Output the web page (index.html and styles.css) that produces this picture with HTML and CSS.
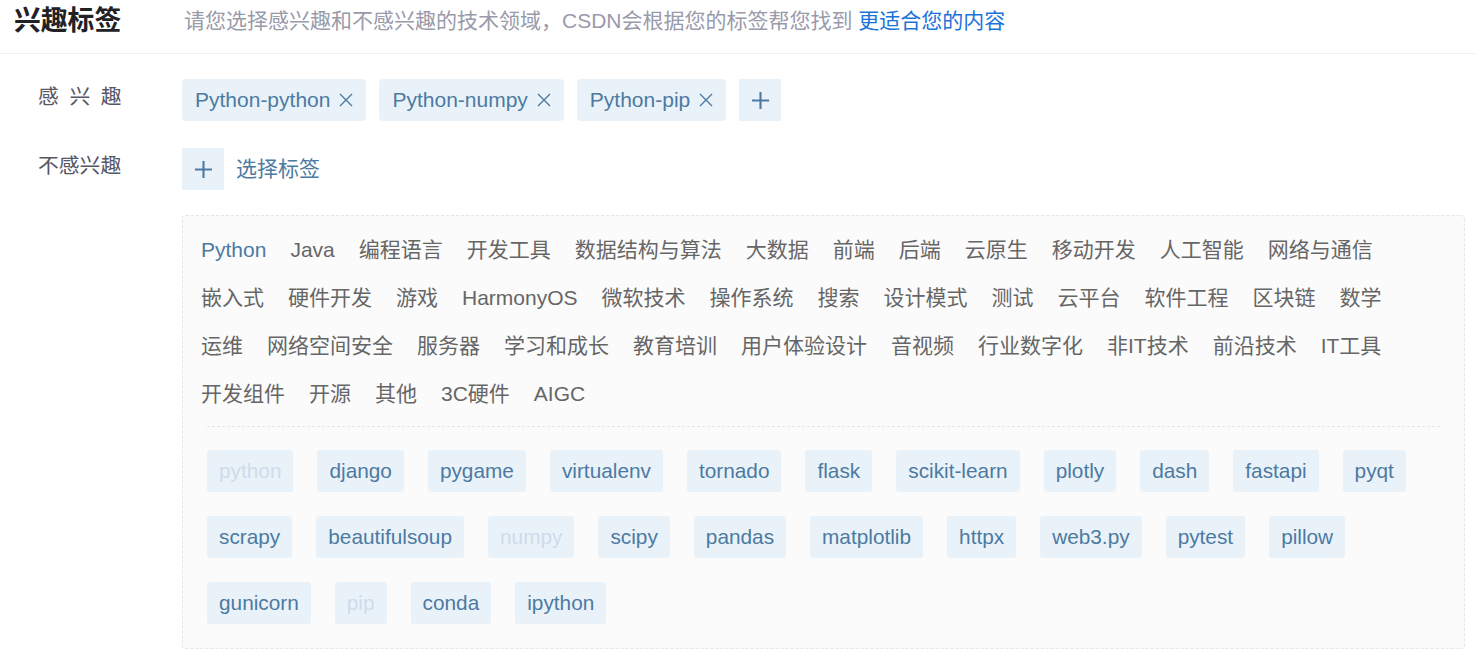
FILE: index.html
```html
<!DOCTYPE html>
<html lang="zh-CN">
<head>
<meta charset="utf-8">
<title>兴趣标签</title>
<link rel="stylesheet" href="styles.css">
</head>
<body>
<header class="head">
  <h1 class="title">兴趣标签</h1>
  <p class="desc">请您选择感兴趣和不感兴趣的技术领域，CSDN会根据您的标签帮您找到 <a class="link" href="#">更适合您的内容</a></p>
</header>

<section class="row row-like">
  <div class="label label-spread">感兴趣</div>
  <div class="tags">
    <span class="tag">Python-python<svg class="x" viewBox="0 0 14 14"><path d="M1 1L13 13M13 1L1 13"/></svg></span>
    <span class="tag">Python-numpy<svg class="x" viewBox="0 0 14 14"><path d="M1 1L13 13M13 1L1 13"/></svg></span>
    <span class="tag">Python-pip<svg class="x" viewBox="0 0 14 14"><path d="M1 1L13 13M13 1L1 13"/></svg></span>
    <span class="add"><svg class="plus" viewBox="0 0 20 20"><path d="M10 1V19M1 10H19"/></svg></span>
  </div>
</section>

<section class="row row-dislike">
  <div class="label">不感兴趣</div>
  <div class="tags">
    <span class="add"><svg class="plus" viewBox="0 0 20 20"><path d="M10 1V19M1 10H19"/></svg></span>
    <span class="pick">选择标签</span>
  </div>
</section>

<section class="panel">
  <div class="cats">
    <span class="cat active">Python</span>
    <span class="cat">Java</span>
    <span class="cat">编程语言</span>
    <span class="cat">开发工具</span>
    <span class="cat">数据结构与算法</span>
    <span class="cat">大数据</span>
    <span class="cat">前端</span>
    <span class="cat">后端</span>
    <span class="cat">云原生</span>
    <span class="cat">移动开发</span>
    <span class="cat">人工智能</span>
    <span class="cat">网络与通信</span>
    <span class="cat">嵌入式</span>
    <span class="cat">硬件开发</span>
    <span class="cat">游戏</span>
    <span class="cat">HarmonyOS</span>
    <span class="cat">微软技术</span>
    <span class="cat">操作系统</span>
    <span class="cat">搜索</span>
    <span class="cat">设计模式</span>
    <span class="cat">测试</span>
    <span class="cat">云平台</span>
    <span class="cat">软件工程</span>
    <span class="cat">区块链</span>
    <span class="cat">数学</span>
    <span class="cat">运维</span>
    <span class="cat">网络空间安全</span>
    <span class="cat">服务器</span>
    <span class="cat">学习和成长</span>
    <span class="cat">教育培训</span>
    <span class="cat">用户体验设计</span>
    <span class="cat">音视频</span>
    <span class="cat">行业数字化</span>
    <span class="cat">非IT技术</span>
    <span class="cat">前沿技术</span>
    <span class="cat">IT工具</span>
    <span class="cat">开发组件</span>
    <span class="cat">开源</span>
    <span class="cat">其他</span>
    <span class="cat">3C硬件</span>
    <span class="cat">AIGC</span>
  </div>
  <div class="chips">
    <span class="chip off">python</span>
    <span class="chip">django</span>
    <span class="chip">pygame</span>
    <span class="chip">virtualenv</span>
    <span class="chip">tornado</span>
    <span class="chip">flask</span>
    <span class="chip">scikit-learn</span>
    <span class="chip">plotly</span>
    <span class="chip">dash</span>
    <span class="chip">fastapi</span>
    <span class="chip">pyqt</span>
    <span class="chip">scrapy</span>
    <span class="chip">beautifulsoup</span>
    <span class="chip off">numpy</span>
    <span class="chip">scipy</span>
    <span class="chip">pandas</span>
    <span class="chip">matplotlib</span>
    <span class="chip">httpx</span>
    <span class="chip">web3.py</span>
    <span class="chip">pytest</span>
    <span class="chip">pillow</span>
    <span class="chip">gunicorn</span>
    <span class="chip off">pip</span>
    <span class="chip">conda</span>
    <span class="chip">ipython</span>
  </div>
</section>
</body>
</html>
```

FILE: styles.css
```css
* { box-sizing: border-box; }

html, body {
  margin: 0;
  padding: 0;
  background: #ffffff;
}

body {
  font-family: "Liberation Sans", "Noto Sans CJK SC", sans-serif;
  font-size: 21px;
  color: #555666;
}

.head {
  display: flex;
  align-items: flex-start;
  height: 54px;
  padding: 5px 0 0 14px;
  border-bottom: 1px solid #eeeeee;
}

.title {
  margin: 0;
  width: 170px;
  flex: none;
  font-size: 26.8px;
  line-height: 32px;
  font-weight: 700;
  color: #222226;
}

.desc {
  margin: 0;
  font-size: 21px;
  line-height: 32px;
  color: #999aaa;
  white-space: nowrap;
}

.link {
  color: #1a73d9;
  text-decoration: none;
}

.row {
  display: flex;
  align-items: flex-start;
  padding-left: 38px;
}

.row-like { margin-top: 25px; }
.row-dislike { margin-top: 27px; }

.label {
  width: 144px;
  flex: none;
  font-size: 20.8px;
  line-height: 36px;
  color: #555666;
}

.label-spread {
  letter-spacing: 10.6px;
}

.tags {
  display: flex;
  align-items: center;
  gap: 13px;
}

.tag {
  display: inline-flex;
  align-items: center;
  height: 42px;
  padding: 0 13px 0 13px;
  background: #eaf2f9;
  border-radius: 4px;
  color: #4c7aa2;
  white-space: nowrap;
}

.x {
  width: 14px;
  height: 14px;
  margin-left: 9px;
  fill: none;
  stroke: #4c7aa2;
  stroke-width: 1.4;
}

.add {
  display: inline-flex;
  align-items: center;
  justify-content: center;
  width: 42px;
  height: 42px;
  background: #eaf2f9;
}

.plus {
  width: 19px;
  height: 19px;
  fill: none;
  stroke: #4c7aa2;
  stroke-width: 2.2;
}

.row-dislike .tags { gap: 12px; }

.pick {
  color: #4c7aa2;
  line-height: 36px;
}

.panel {
  margin: 25px 10px 0 182px;
  background: #fbfbfb;
  border: 1px dashed #e6e6e6;
  border-radius: 4px;
  padding-bottom: 24px;
}

.cats {
  display: flex;
  flex-wrap: wrap;
  column-gap: 24px;
  padding: 10px 24px 0 18px;
  line-height: 48px;
}

.cat {
  color: #666666;
  white-space: nowrap;
}

.cat.active {
  color: #4c7aa2;
}

.chips {
  display: flex;
  flex-wrap: wrap;
  gap: 24px 24px;
  margin: 8px 24px 0 24px;
  padding-top: 23px;
  border-top: 1px dashed #e6e6e6;
  font-size: 20.8px;
}

.chip {
  display: inline-flex;
  align-items: center;
  height: 42px;
  padding: 0 12px;
  background: #eaf2f9;
  border-radius: 3px;
  color: #4c7aa2;
  white-space: nowrap;
}

.chip.off {
  color: #cddcea;
}
```
